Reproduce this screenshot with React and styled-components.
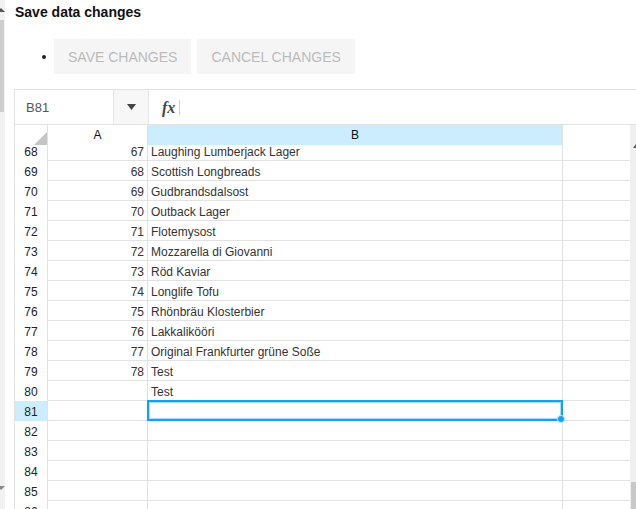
import React from 'react';
import styled, { createGlobalStyle } from 'styled-components';

const GlobalStyle = createGlobalStyle`
  html, body {
    margin: 0;
    padding: 0;
    background: #fff;
    overflow: hidden;
  }
  body {
    font-family: "Liberation Sans", Arial, sans-serif;
  }
`;

const rows = [
  { n: 68, a: '67', b: 'Laughing Lumberjack Lager' },
  { n: 69, a: '68', b: 'Scottish Longbreads' },
  { n: 70, a: '69', b: 'Gudbrandsdalsost' },
  { n: 71, a: '70', b: 'Outback Lager' },
  { n: 72, a: '71', b: 'Flotemysost' },
  { n: 73, a: '72', b: 'Mozzarella di Giovanni' },
  { n: 74, a: '73', b: 'Röd Kaviar' },
  { n: 75, a: '74', b: 'Longlife Tofu' },
  { n: 76, a: '75', b: 'Rhönbräu Klosterbier' },
  { n: 77, a: '76', b: 'Lakkalikööri' },
  { n: 78, a: '77', b: 'Original Frankfurter grüne Soße' },
  { n: 79, a: '78', b: 'Test' },
  { n: 80, a: '', b: 'Test' },
  { n: 81, a: '', b: '', selected: true },
  { n: 82, a: '', b: '' },
  { n: 83, a: '', b: '' },
  { n: 84, a: '', b: '' },
  { n: 85, a: '', b: '' },
  { n: 86, a: '', b: '' },
];

const Page = styled.div`
  display: flex;
  height: 509px;
  width: 636px;
  overflow: hidden;
`;

const EdgeScroll = styled.div`
  position: relative;
  flex: 0 0 5px;
  background: #f1f1f1;
  overflow: hidden;
`;

const EdgeThumb = styled.div`
  margin-top: 20px;
  height: 92px;
  width: 4px;
  background: #cdcdcd;
`;

const EdgeArrow = styled.svg`
  position: absolute;
  left: -3px;
  top: ${(p) => p.$top}px;
`;

const Main = styled.div`
  flex: 1;
  padding-left: 9px;
  min-width: 0;
`;

const Title = styled.h3`
  margin: 0;
  padding: 4px 0 0 1px;
  font-size: 14px;
  line-height: 16px;
  font-weight: bold;
  color: #111;
`;

const Toolbar = styled.div`
  display: flex;
  align-items: center;
  margin-top: 19px;
  height: 35px;
  gap: 6px;
`;

const Bullet = styled.span`
  width: 4px;
  height: 4px;
  border-radius: 50%;
  background: #222;
  margin: 0 2px 0 28px;
`;

const Button = styled.button`
  height: 35px;
  padding: 0 14px;
  border: none;
  background: #f5f5f5;
  color: #bbbbbb;
  font-family: "Liberation Sans", Arial, sans-serif;
  font-size: 14px;
  text-transform: uppercase;
  cursor: default;
`;

const Sheet = styled.div`
  margin-top: 15px;
  width: 626px;
  border-left: 1px solid #e2e2e2;
  border-top: 1px solid #e2e2e2;
  display: flex;
  flex-direction: column;
  height: 420px;
`;

const FormulaBar = styled.div`
  display: flex;
  height: 34px;
  border-bottom: 1px solid #e2e2e2;
`;

const NameBox = styled.div`
  width: 87px;
  padding-left: 11px;
  display: flex;
  align-items: center;
  font-size: 13px;
  color: #555;
`;

const DropButton = styled.div`
  width: 34px;
  border-left: 1px solid #e6e6e6;
  border-right: 1px solid #e6e6e6;
  background: #f7f7f7;
  display: flex;
  align-items: center;
  justify-content: center;
`;

const FormulaInput = styled.div`
  flex: 1;
  display: flex;
  align-items: center;
  padding-left: 13px;
`;

const Fx = styled.span`
  font-family: "Liberation Serif", "Times New Roman", serif;
  font-style: italic;
  font-weight: bold;
  font-size: 16px;
  color: #444;
  padding-right: 4px;
  border-right: 1px solid #cfcfcf;
  line-height: 15px;
`;

const GridArea = styled.div`
  flex: 1;
  display: flex;
  min-height: 0;
`;

const GridBody = styled.div`
  flex: 1;
  display: flex;
  flex-direction: column;
  overflow: hidden;
`;

const cols = '33px 100px 415px 1fr';

const HeaderRow = styled.div`
  display: grid;
  grid-template-columns: ${cols};
  height: 20px;
  flex: 0 0 20px;
  position: relative;
  z-index: 1;
  background: #fff;
`;

const Corner = styled.div`
  position: relative;
  border-right: 1px solid #e2e2e2;
  &::after {
    content: '';
    position: absolute;
    right: 0;
    bottom: 0;
    border-style: solid;
    border-width: 0 0 13px 13px;
    border-color: transparent transparent #c4c4c4 transparent;
  }
`;

const ColHead = styled.div`
  display: flex;
  align-items: center;
  justify-content: center;
  font-size: 12px;
  color: #111;
  background: ${(p) => (p.$active ? '#ccedfd' : '#fff')};
  border-right: ${(p) => (p.$last ? 'none' : '1px solid #e2e2e2')};
`;

const Rows = styled.div`
  margin-top: -4px;
`;

const Row = styled.div`
  display: grid;
  grid-template-columns: ${cols};
  height: 20px;
`;

const RowHead = styled.div`
  display: flex;
  align-items: center;
  justify-content: center;
  padding-top: 2px;
  font-size: 12px;
  color: #222;
  border-right: 1px solid #e2e2e2;
  background: ${(p) => (p.$active ? '#ccedfd' : '#fff')};
`;

const Cell = styled.div`
  position: relative;
  display: flex;
  align-items: center;
  justify-content: ${(p) => (p.$num ? 'flex-end' : 'flex-start')};
  padding: 2px 3px 0 3px;
  font-size: 12px;
  color: #333;
  border-right: ${(p) => (p.$last ? 'none' : '1px solid #e2e2e2')};
  border-bottom: 1px solid #e2e2e2;
  white-space: nowrap;
  overflow: visible;
`;

const Selection = styled.div`
  position: absolute;
  left: -1px;
  top: -1px;
  right: -1px;
  bottom: -1px;
  border: 2px solid #11a3f2;
  box-shadow: inset 0 0 0 1px #a8dcf7;
  pointer-events: none;
  z-index: 2;
`;

const FillHandle = styled.div`
  position: absolute;
  right: -4px;
  bottom: -4px;
  width: 6px;
  height: 6px;
  border-radius: 50%;
  background: #11a3f2;
  border: 1px solid #bfe6fb;
  z-index: 3;
`;

const VScroll = styled.div`
  position: relative;
  flex: 0 0 11px;
  background: #f0f0f0;
  display: flex;
  flex-direction: column;
  justify-content: flex-end;
`;

const VArrow = styled.svg`
  position: absolute;
  left: 3px;
  top: 18px;
`;

const VThumb = styled.div`
  margin-left: 1px;
  height: 28px;
  width: 8px;
  background: #c8c8c8;
`;

export default function App() {
  return (
    <>
      <GlobalStyle />
      <Page>
        <EdgeScroll>
          <EdgeArrow $top={7} width="8" height="6" viewBox="0 0 8 6">
            <polygon points="0,5 4,1 8,5" fill="#555" />
          </EdgeArrow>
          <EdgeThumb />
          <EdgeArrow $top={485} width="8" height="6" viewBox="0 0 8 6">
            <polygon points="0,1 4,5 8,1" fill="#888" />
          </EdgeArrow>
        </EdgeScroll>
        <Main>
          <Title>Save data changes</Title>
          <Toolbar>
            <Bullet />
            <Button disabled>Save changes</Button>
            <Button disabled>Cancel changes</Button>
          </Toolbar>
          <Sheet>
            <FormulaBar>
              <NameBox>B81</NameBox>
              <DropButton>
                <svg width="9" height="6" viewBox="0 0 9 6">
                  <polygon points="0,0 9,0 4.5,6" fill="#444" />
                </svg>
              </DropButton>
              <FormulaInput>
                <Fx>fx</Fx>
              </FormulaInput>
            </FormulaBar>
            <GridArea>
              <GridBody>
                <HeaderRow>
                  <Corner />
                  <ColHead>A</ColHead>
                  <ColHead $active>B</ColHead>
                  <ColHead $last />
                </HeaderRow>
                <Rows>
                  {rows.map((r) => (
                    <Row key={r.n}>
                      <RowHead $active={r.selected}>{r.n}</RowHead>
                      <Cell $num>{r.a}</Cell>
                      <Cell>
                        {r.b}
                        {r.selected && (
                          <Selection>
                            <FillHandle />
                          </Selection>
                        )}
                      </Cell>
                      <Cell $last />
                    </Row>
                  ))}
                </Rows>
              </GridBody>
              <VScroll>
                <VArrow width="6" height="6" viewBox="0 0 6 6">
                  <polygon points="0,5 3,1 6,5" fill="#555" />
                </VArrow>
                <VThumb />
              </VScroll>
            </GridArea>
          </Sheet>
        </Main>
      </Page>
    </>
  );
}
